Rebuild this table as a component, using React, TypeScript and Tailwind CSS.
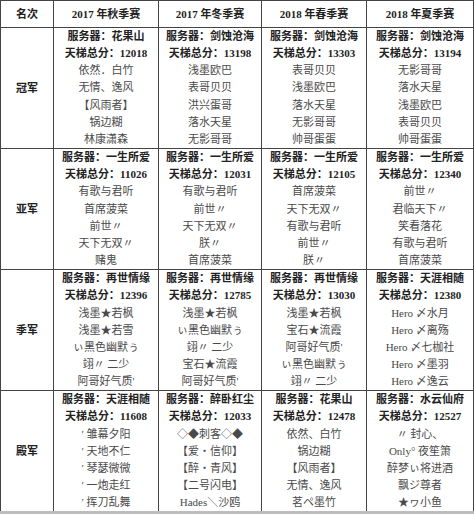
const seasons = ['2017 年秋季赛', '2017 年冬季赛', '2018 年春季赛', '2018 年夏季赛']

type Cell = { server: string; score: string; players: string[] }
type Rank = { label: string; cells: Cell[] }

const ranks: Rank[] = [
  {
    label: '冠军',
    cells: [
      { server: '花果山', score: '12018', players: ['依然．白竹', '无情、逸风', '【风雨者】', '锅边糊', '林康潇森'] },
      { server: '剑蚀沧海', score: '13198', players: ['浅墨欧巴', '表哥贝贝', '洪兴蛋哥', '落水天星', '无影哥哥'] },
      { server: '剑蚀沧海', score: '13303', players: ['表哥贝贝', '浅墨欧巴', '落水天星', '无影哥哥', '帅哥蛋蛋'] },
      { server: '剑蚀沧海', score: '13194', players: ['无影哥哥', '落水天星', '浅墨欧巴', '表哥贝贝', '帅哥蛋蛋'] },
    ],
  },
  {
    label: '亚军',
    cells: [
      { server: '一生所爱', score: '11026', players: ['有歌与君听', '首席菠菜', '前世〃', '天下无双〃', '赌鬼'] },
      { server: '一生所爱', score: '12031', players: ['有歌与君听', '前世〃', '天下无双〃', '朕〃', '首席菠菜'] },
      { server: '一生所爱', score: '12105', players: ['首席菠菜', '天下无双〃', '有歌与君听', '前世〃', '朕〃'] },
      { server: '一生所爱', score: '12340', players: ['前世〃', '君临天下〃', '笑看落花', '有歌与君听', '首席菠菜'] },
    ],
  },
  {
    label: '季军',
    cells: [
      { server: '再世情缘', score: '12396', players: ['浅墨★若枫', '浅墨★若雪', 'ぃ黑色幽默ぅ', '翊〃 二少', "阿哥好气质'"] },
      { server: '再世情缘', score: '12785', players: ['浅墨★若枫', 'ぃ黑色幽默ぅ', '翊〃 二少', '宝石★流霞', "阿哥好气质'"] },
      { server: '再世情缘', score: '13030', players: ['浅墨★若枫', '宝石★流霞', "阿哥好气质'", 'ぃ黑色幽默ぅ', '翊〃 二少'] },
      { server: '天涯相随', score: '12380', players: ['Hero 〆水月', 'Hero 〆离殇', 'Hero 〆七枷社', 'Hero 〆墨羽', 'Hero 〆逸云'] },
    ],
  },
  {
    label: '殿军',
    cells: [
      { server: '天涯相随', score: '11608', players: ['′ 雏幕夕阳', '′ 天地不仁', '′ 琴瑟微微', '′ 一炮走红', '′ 挥刀乱舞'] },
      { server: '醉卧红尘', score: '12033', players: ['◇◆刺客◇◆', '【爱・信仰】', '【醉・青风】', '【二号闪电】', 'Hades＼沙鸥'] },
      { server: '花果山', score: '12478', players: ['依然、白竹', '锅边糊', '【风雨者】', '无情、逸风', '茗ペ墨竹'] },
      { server: '水云仙府', score: '12527', players: ['〃 封心、', 'Only° 夜笙箫', '醉梦ぃ将进酒', '飘ジ尊者', '★ヮ小鱼'] },
    ],
  },
]

export default function App() {
  return (
    <div className="h-[515px] w-[474px] bg-white font-['Liberation_Serif','Noto_Sans_CJK_SC',serif] text-[11px]">
      <table className="w-[473px] table-fixed border-collapse border-b-[3px] border-b-[#bdbdbd]">
        <colgroup>
          <col className="w-[53px]" />
          <col className="w-[105px]" />
          <col className="w-[103px]" />
          <col className="w-[105px]" />
          <col className="w-[107px]" />
        </colgroup>
        <thead>
          <tr className="h-[27px]">
            <th className="border border-[#444] font-bold text-[#222]">名次</th>
            {seasons.map((s) => (
              <th key={s} className="border border-[#444] font-bold text-[#222]">
                {s}
              </th>
            ))}
          </tr>
        </thead>
        <tbody>
          {ranks.map((rank) => (
            <tr key={rank.label}>
              <td className="border border-[#444] text-center font-bold text-[#222]">{rank.label}</td>
              {rank.cells.map((cell, i) => (
                <td key={i} className="border border-[#444] p-0 text-center leading-[17.15px]">
                  <div className="font-bold text-[#222]">服务器：{cell.server}</div>
                  <div className="font-bold text-[#222]">天梯总分：{cell.score}</div>
                  {cell.players.map((p) => (
                    <div key={p} className="whitespace-nowrap text-[#4a4a4a]">
                      {p}
                    </div>
                  ))}
                </td>
              ))}
            </tr>
          ))}
        </tbody>
      </table>
    </div>
  )
}
